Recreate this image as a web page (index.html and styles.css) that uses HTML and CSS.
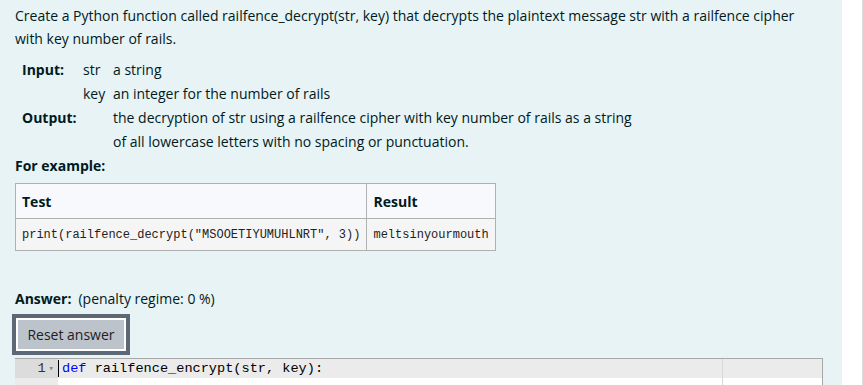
FILE: index.html
```html
<!DOCTYPE html>
<html>
<head>
<meta charset="utf-8">
<link rel="stylesheet" href="styles.css">
</head>
<body>
<div class="page">
  <div class="panel">
    <p class="intro">Create a Python function called railfence_decrypt(str, key) that decrypts the plaintext message str with a railfence cipher with key number of rails.</p>
    <div class="params">
      <span class="lbl">Input:</span><span class="nm">str</span><span class="desc">a string</span>
      <span class="lbl"></span><span class="nm">key</span><span class="desc">an integer for the number of rails</span>
      <span class="lbl">Output:</span><span class="nm"></span><span class="desc">the decryption of str using a railfence cipher with key number of rails as a string</span>
      <span class="lbl"></span><span class="nm"></span><span class="desc">of all lowercase letters with no spacing or punctuation.</span>
    </div>
    <h4 class="example">For example:</h4>
    <table class="examples">
      <thead>
        <tr><th class="col-test">Test</th><th class="col-result">Result</th></tr>
      </thead>
      <tbody>
        <tr><td class="code">print(railfence_decrypt("MSOOETIYUMUHLNRT", 3))</td><td class="code">meltsinyourmouth</td></tr>
      </tbody>
    </table>
    <div class="answer"><span class="answer-lbl">Answer:</span><span class="penalty">(penalty regime: 0 %)</span></div>
    <div class="btn-wrap"><button class="reset">Reset answer</button></div>
    <div class="editor">
      <div class="row active">
        <div class="gutter"><span class="ln">1</span><span class="fold">▾</span></div>
        <div class="line"><span class="cursor"></span><span class="kw">def</span> railfence_encrypt(str, key):</div>
      </div>
      <div class="row">
        <div class="gutter"></div>
        <div class="line"></div>
      </div>
      <div class="margin-line"></div>
    </div>
  </div>
  <div class="side"></div>
</div>
</body>
</html>
```

FILE: styles.css
```css
html, body {
  margin: 0;
  padding: 0;
  background: #ffffff;
  overflow: hidden;
}
body {
  font-family: "Open Sans", "Noto Sans", sans-serif;
  font-size: 14px;
  color: #001a1e;
}
.page {
  display: flex;
  width: 863px;
  height: 385px;
}
.panel {
  width: 842px;
  height: 385px;
  background: #e7f3f5;
  box-sizing: border-box;
  padding: 4px 20px 0 15px;
  overflow: hidden;
}
.side {
  width: 20px;
  border-right: 1px solid #dedede;
}
.intro {
  margin: 0;
  line-height: 23px;
}
.params {
  display: grid;
  grid-template-columns: 61px 30px auto;
  margin: 8px 0 0 7px;
  line-height: 24px;
}
.lbl {
  font-weight: 700;
}
.example {
  margin: 0;
  font-size: 14px;
  font-weight: 700;
  line-height: 23px;
}
.examples {
  border-collapse: collapse;
  margin-top: 6px;
}
.examples th, .examples td {
  border: 1px solid #b0b0b0;
  text-align: left;
  padding: 0 6px;
}
.examples th {
  background: #f8f9fc;
  height: 34px;
  font-weight: 700;
}
.examples td {
  background: #f5f5f5;
  height: 31px;
}
.code {
  font-family: "Liberation Mono", "DejaVu Sans Mono", monospace;
  font-size: 12px;
  color: #222;
}
.answer {
  margin-top: 37px;
  line-height: 22px;
}
.answer-lbl {
  font-weight: 700;
  margin-right: 7px;
}
.btn-wrap {
  margin-top: 4px;
  margin-left: -3px;
  display: inline-block;
  border: 4px solid #5d6877;
}
.reset {
  display: block;
  margin: 0;
  border: 2px solid #ffffff;
  background: #bcc3cb;
  color: #1d2125;
  font-family: inherit;
  font-size: 14px;
  width: 110px;
  height: 33px;
  padding: 0;
}
.editor {
  position: relative;
  margin-top: 3px;
  width: 807px;
  border-top: 1px solid #a8a8a8;
  border-right: 1px solid #a8a8a8;
  background: #ffffff;
}
.row {
  display: flex;
  height: 19px;
}
.gutter {
  width: 43px;
  background: #ebebeb;
  display: flex;
  justify-content: flex-end;
  align-items: center;
  box-sizing: border-box;
  padding-right: 4px;
  color: #333;
  font-family: "Liberation Mono", monospace;
  font-size: 13.6px;
}
.row.active .gutter {
  background: #dcdcdc;
}
.row.active {
  background: #ebebeb;
}
.fold {
  font-size: 9px;
  color: #888;
  margin-left: 3px;
}
.line {
  flex: 1;
  font-family: "Liberation Mono", monospace;
  font-size: 13.6px;
  line-height: 19px;
  padding-left: 4px;
  color: #000;
  position: relative;
}
.cursor {
  position: absolute;
  left: 0;
  top: 1px;
  width: 1px;
  height: 17px;
  background: #000;
}
.kw {
  color: #0000ff;
}
.margin-line {
  position: absolute;
  left: 707px;
  top: 0;
  bottom: 0;
  width: 1px;
  background: #d8d8d8;
}
```
